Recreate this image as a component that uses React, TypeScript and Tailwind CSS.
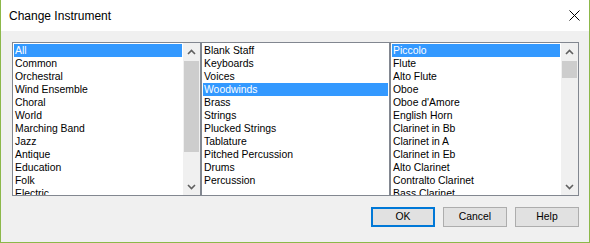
import React from "react";

const list1 = ["All","Common","Orchestral","Wind Ensemble","Choral","World","Marching Band","Jazz","Antique","Education","Folk","Electric"];
const list2 = ["Blank Staff","Keyboards","Voices","Woodwinds","Brass","Strings","Plucked Strings","Tablature","Pitched Percussion","Drums","Percussion"];
const list3 = ["Piccolo","Flute","Alto Flute","Oboe","Oboe d'Amore","English Horn","Clarinet in Bb","Clarinet in A","Clarinet in Eb","Alto Clarinet","Contralto Clarinet","Bass Clarinet"];

function Chevron({ up }: { up: boolean }) {
  return (
    <svg width="9" height="6" viewBox="0 0 9 6">
      <path
        d={up ? "M1 5 L4.5 1.5 L8 5" : "M1 1 L4.5 4.5 L8 1"}
        fill="none"
        stroke="#606060"
        strokeWidth="1.6"
      />
    </svg>
  );
}

function ScrollBar({ thumbTop, thumbHeight }: { thumbTop: number; thumbHeight: number }) {
  return (
    <div className="w-[17px] h-full bg-[#f0f0f0] flex flex-col">
      <div className="h-[17px] flex items-center justify-center">
        <Chevron up />
      </div>
      <div className="flex-1 relative">
        <div
          className="absolute left-[1px] right-[1px] bg-[#cdcdcd]"
          style={{ top: thumbTop, height: thumbHeight }}
        />
      </div>
      <div className="h-[17px] flex items-center justify-center">
        <Chevron up={false} />
      </div>
    </div>
  );
}

function ListBox({
  items,
  selected,
  scroll,
}: {
  items: string[];
  selected: number;
  scroll?: { top: number; height: number };
}) {
  return (
    <div className="w-[189px] h-[154px] border border-[#828790] bg-white flex overflow-hidden">
      <div className="flex-1 p-[1px] overflow-hidden">
        {items.map((t, i) => (
          <div
            key={t}
            className={
              "h-[13px] leading-[13px] pl-[1px] whitespace-nowrap " +
              (i === selected ? "bg-[#3399ff] text-white" : "text-black")
            }
          >
            {t}
          </div>
        ))}
      </div>
      {scroll && <ScrollBar thumbTop={scroll.top} thumbHeight={scroll.height} />}
    </div>
  );
}

export default function App() {
  return (
    <div
      className="w-[590px] h-[243px] flex flex-col border-l border-r border-b border-[#8cb84a] bg-[#f0f0f0]"
      style={{ fontFamily: '"Liberation Sans", Arial, sans-serif' }}
    >
      <div className="h-[31px] bg-white flex items-center justify-between pl-[8px] pr-[9px]">
        <span className="text-[12px] text-black">Change Instrument</span>
        <svg width="11" height="11" viewBox="0 0 11 11">
          <path d="M0.5 0.5 L10.5 10.5 M10.5 0.5 L0.5 10.5" stroke="#000" strokeWidth="1" />
        </svg>
      </div>
      <div className="flex-1 flex flex-col pt-[11px] pl-[11px] pr-[10px] text-[10.4px]">
        <div className="flex">
          <ListBox items={list1} selected={0} scroll={{ top: 1, height: 91 }} />
          <ListBox items={list2} selected={3} />
          <ListBox items={list3} selected={0} scroll={{ top: 1, height: 17 }} />
        </div>
        <div className="flex justify-end gap-[8px] mt-[11px]">
          <button className="w-[64px] h-[20px] bg-[#e1e1e1] border-2 border-[#0078d7] text-black">OK</button>
          <button className="w-[64px] h-[20px] bg-[#e1e1e1] border border-[#adadad] text-black">Cancel</button>
          <button className="w-[64px] h-[20px] bg-[#e1e1e1] border border-[#adadad] text-black">Help</button>
        </div>
      </div>
    </div>
  );
}
